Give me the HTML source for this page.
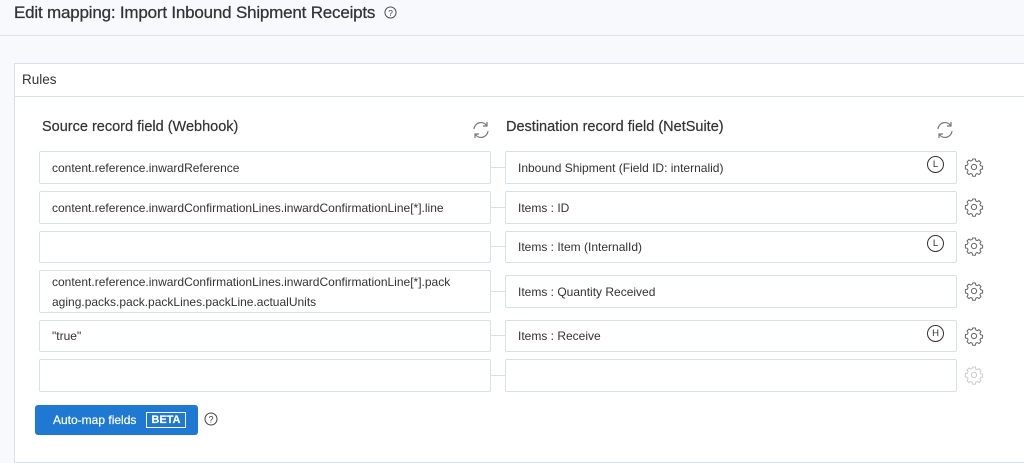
<!DOCTYPE html>
<html><head><style>
*{box-sizing:border-box;margin:0;padding:0}
body{width:1024px;height:452px;overflow:hidden;background:#f8f9fc;font-family:"Liberation Sans",sans-serif;color:#333;position:relative}
.abs{position:absolute}
.title{left:14px;top:3px;font-size:17px;color:#333;letter-spacing:-0.2px;-webkit-text-stroke:0.25px #333}
.hline{left:0;top:35px;width:1024px;height:1px;background:#dde3ea}
.panel{left:14px;top:63px;width:1020px;height:400px;background:#fff;border:1px solid #d6e1ec}
.phead{left:14px;top:63px;width:1020px;height:34px;border-bottom:1px solid #d6e1ec;font-size:13.5px;padding:9px 0 0 8px;color:#333}
.h{font-size:14.5px;color:#333;-webkit-text-stroke:0.2px #333}
.box{position:absolute;background:#fff;border:1px solid #d6e1ec;border-radius:2px;font-size:12px;color:#333;padding-left:12px;display:flex;align-items:center}
.conn{position:absolute;height:1px;background:#d6e1ec;left:490px;width:15px}
.circ{position:absolute;width:17px;height:17px;border:1.2px solid #333;border-radius:50%;font-size:9.5px;text-align:center;line-height:15px;color:#333}
.gear{position:absolute;left:964px}
</style></head><body>
<div class="abs title">Edit mapping: Import Inbound Shipment Receipts
<svg width="13" height="13" viewBox="0 0 14 14" style="vertical-align:-1px;margin-left:4px"><circle cx="7" cy="7" r="6" fill="none" stroke="#444" stroke-width="1"/><text x="7" y="10.5" font-size="9" text-anchor="middle" fill="#444" font-family="Liberation Sans">?</text></svg></div>
<div class="abs hline"></div>
<div class="abs panel"></div>
<div class="abs phead">Rules</div>
<div class="abs h" style="left:42px;top:119px">Source record field (Webhook)</div>
<div class="abs h" style="left:506px;top:119px">Destination record field (NetSuite)</div>
<svg class="abs" style="left:471px;top:120px" width="20" height="20" viewBox="0 0 20 20" fill="none" stroke="#777" stroke-width="1.2"><path d="M3 9a7 7 0 0 1 13-3M17 11a7 7 0 0 1-13 3"/><path d="M16 2v4h-4M4 18v-4h4"/></svg>
<svg class="abs" style="left:935px;top:120px" width="20" height="20" viewBox="0 0 20 20" fill="none" stroke="#777" stroke-width="1.2"><path d="M3 9a7 7 0 0 1 13-3M17 11a7 7 0 0 1-13 3"/><path d="M16 2v4h-4M4 18v-4h4"/></svg>

<div class="box" style="left:39px;top:151px;width:452px;height:33px">content.reference.inwardReference</div>
<div class="conn" style="top:167px"></div>
<div class="box" style="left:505px;top:151px;width:452px;height:33px">Inbound Shipment (Field ID: internalid)</div>
<div class="circ" style="left:927px;top:156px">L</div>

<div class="box" style="left:39px;top:191px;width:452px;height:33px">content.reference.inwardConfirmationLines.inwardConfirmationLine[*].line</div>
<div class="conn" style="top:207px"></div>
<div class="box" style="left:505px;top:191px;width:452px;height:33px">Items : ID</div>

<div class="box" style="left:39px;top:231px;width:452px;height:32px"></div>
<div class="conn" style="top:246px"></div>
<div class="box" style="left:505px;top:231px;width:452px;height:32px">Items : Item (InternalId)</div>
<div class="circ" style="left:927px;top:235px">L</div>

<div class="box" style="left:39px;top:270px;width:452px;height:43px;line-height:20px">content.reference.inwardConfirmationLines.inwardConfirmationLine[*].pack<br>aging.packs.pack.packLines.packLine.actualUnits</div>
<div class="conn" style="top:291px"></div>
<div class="box" style="left:505px;top:275px;width:452px;height:33px">Items : Quantity Received</div>

<div class="box" style="left:39px;top:320px;width:452px;height:32px">"true"</div>
<div class="conn" style="top:335px"></div>
<div class="box" style="left:505px;top:320px;width:452px;height:32px">Items : Receive</div>
<div class="circ" style="left:927px;top:325px">H</div>

<div class="box" style="left:39px;top:359px;width:452px;height:33px"></div>
<div class="conn" style="top:375px"></div>
<div class="box" style="left:505px;top:359px;width:452px;height:33px"></div>

<svg width="0" height="0" style="position:absolute"><defs><g id="g"><path d="M8.6 2h2.8l.4 2 1.5.7 1.7-1.1 2 2-1.1 1.7.7 1.5 2 .4v2.8l-2 .4-.7 1.5 1.1 1.7-2 2-1.7-1.1-1.5.7-.4 2H8.6l-.4-2-1.5-.7-1.7 1.1-2-2 1.1-1.7-.7-1.5-2-.4V8.6l2-.4.7-1.5-1.1-1.7 2-2 1.7 1.1 1.5-.7z" fill="none" stroke-width="1" stroke-linejoin="round"/><circle cx="10" cy="10" r="2.6" fill="none" stroke-width="1"/></g></defs></svg>
<svg class="gear" style="top:157px" width="20" height="20" stroke="#666"><use href="#g"/></svg>
<svg class="gear" style="top:197px" width="20" height="20" stroke="#666"><use href="#g"/></svg>
<svg class="gear" style="top:236px" width="20" height="20" stroke="#666"><use href="#g"/></svg>
<svg class="gear" style="top:281px" width="20" height="20" stroke="#666"><use href="#g"/></svg>
<svg class="gear" style="top:326px" width="20" height="20" stroke="#666"><use href="#g"/></svg>
<svg class="gear" style="top:365px" width="20" height="20" stroke="#ccc"><use href="#g"/></svg>

<div class="abs" style="left:35px;top:405px;width:163px;height:30px;background:#1f78d1;border-radius:3px;color:#fff;font-size:12px;display:flex;align-items:center;padding-left:18px;-webkit-text-stroke:0.2px #fff">Auto-map fields<span style="margin-left:10px;border:1px solid #fff;font-weight:bold;font-size:11px;padding:1px 4px">BETA</span></div>
<svg class="abs" style="left:204px;top:412px" width="14" height="14" viewBox="0 0 14 14"><circle cx="7" cy="7" r="6" fill="none" stroke="#444" stroke-width="1"/><text x="7" y="10.5" font-size="9" text-anchor="middle" fill="#444" font-family="Liberation Sans">?</text></svg>
</body></html>
